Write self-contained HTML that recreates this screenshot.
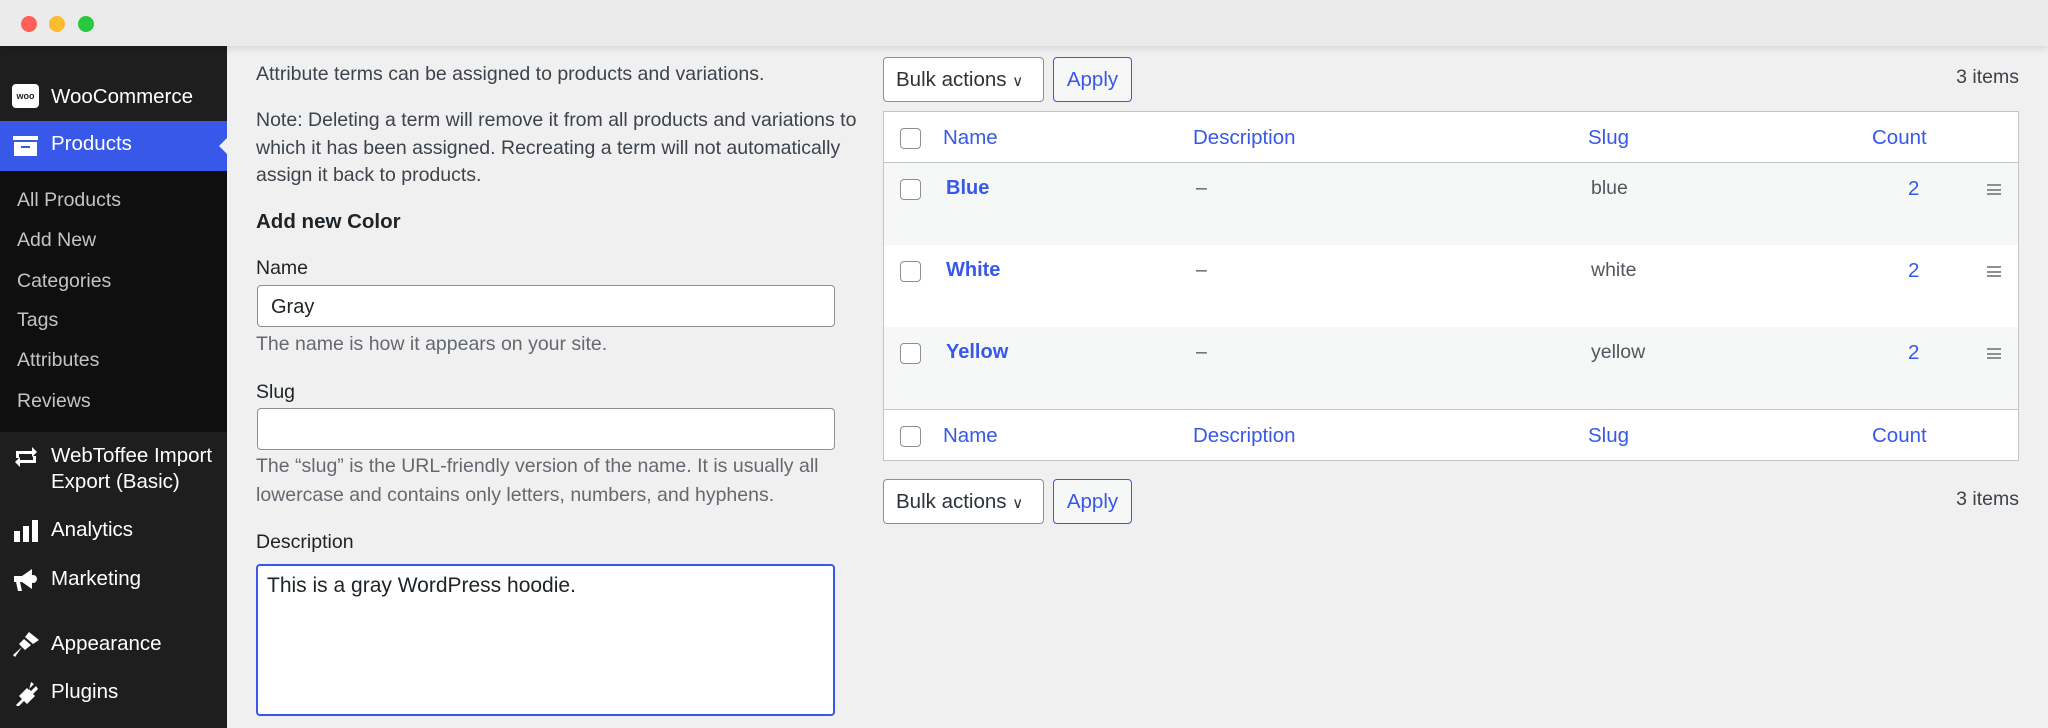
<!DOCTYPE html>
<html><head><meta charset="utf-8"><style>
*{margin:0;padding:0;box-sizing:border-box}
body{width:2048px;height:728px;overflow:hidden;background:#f0f0f1;font-family:"Liberation Sans",sans-serif;position:relative;color:#1d2327}
.a{position:absolute;white-space:nowrap}
.tb{position:absolute;left:0;top:0;width:2048px;height:46px;background:#ebebeb;box-shadow:0 2px 8px rgba(0,0,0,.12);z-index:2}
.dot{position:absolute;top:16px;width:16px;height:16px;border-radius:50%}
.sb{position:absolute;left:0;top:46px;width:227px;height:682px;background:#1e1e1e}
.sub{position:absolute;left:0;top:171px;width:227px;height:261px;background:#0f0f0f}
.prod{position:absolute;left:0;top:121px;width:227px;height:50px;background:#3858e9}
.mi{color:#fff;font-size:20.5px}
.si{color:#c3c4c7;font-size:19.5px;left:17px}
.ic{position:absolute;left:12px}
.t{font-size:19.5px;color:#3c434a}
.lbl{font-size:19.5px;color:#1d2327}
.inp{position:absolute;background:#fff;border:1px solid #8c8f94;border-radius:4px}
.hl{color:#646970;font-size:19.5px}
.btn{position:absolute;height:45px;border-radius:4px;font-size:20.5px;line-height:43px}
.tbl{position:absolute;left:883px;top:111px;width:1136px;height:350px;background:#fff;border:1px solid #c3c4c7}
.row{position:absolute;left:0;width:1134px}
.cb{position:absolute;left:16px;width:21px;height:21px;border:1px solid #8c8f94;border-radius:4px;background:#fff}
.hd{color:#3858e9;font-size:20.5px}
.nm{color:#3858e9;font-size:20px;font-weight:bold}
.cell{font-size:19.5px;color:#50575e}
.hm{position:absolute;width:14px;height:11px;border-top:2px solid #8c8f94;border-bottom:2px solid #8c8f94}
.hm:after{content:"";position:absolute;left:0;top:2.5px;width:14px;height:2px;background:#8c8f94}
</style></head><body>
<div class="tb">
<div class="dot" style="left:21px;background:#fe5f57"></div>
<div class="dot" style="left:49px;background:#febc2e"></div>
<div class="dot" style="left:78px;background:#28c840"></div>
</div>
<div class="sb"></div>
<div class="sub"></div>
<div class="prod"></div>
<div class="a" style="left:219px;top:137px;width:0;height:0;border-top:9px solid transparent;border-bottom:9px solid transparent;border-right:9px solid #f0f0f1"></div>

<div class="ic" style="top:84px;width:27px;height:24px;background:#fff;border-radius:4px;font-size:9px;font-weight:bold;color:#1e1e1e;text-align:center;line-height:24px">woo</div>
<div class="a mi" style="left:51px;top:85px">WooCommerce</div>
<div class="ic" style="top:136px;width:25px;height:4px;background:#fff;left:13px"></div>
<div class="ic" style="top:142px;width:23px;height:14px;background:#fff;left:14px"><div style="margin:4px 7px;width:9px;height:2px;background:#3858e9"></div></div>
<div class="a mi" style="left:51px;top:132px">Products</div>

<div class="a si" style="top:189px">All Products</div>
<div class="a si" style="top:229px">Add New</div>
<div class="a si" style="top:270px">Categories</div>
<div class="a si" style="top:309px">Tags</div>
<div class="a si" style="top:349px">Attributes</div>
<div class="a si" style="top:390px">Reviews</div>

<svg class="ic" style="top:446px;left:14px" width="24" height="22" viewBox="0 0 24 22" fill="#fff"><path d="M2 5h16V1l5 5-5 5V8H5v4H2zM22 17H6v4l-5-5 5-5v3h13v-4h3z"/></svg>
<div class="a mi" style="left:51px;top:444px">WebToffee Import</div>
<div class="a mi" style="left:51px;top:470px">Export (Basic)</div>
<svg class="ic" style="top:520px;left:14px" width="24" height="22" fill="#fff"><rect x="0" y="11" width="6" height="11"/><rect x="9" y="6" width="6" height="16"/><rect x="18" y="0" width="6" height="22"/></svg>
<div class="a mi" style="left:51px;top:518px">Analytics</div>
<svg class="ic" style="top:567px;left:13px" width="26" height="26" fill="#fff"><path d="M1 9h8l10-7v20L9 15H7l2 9H5l-2-9H1z"/><circle cx="20" cy="12" r="4"/></svg>
<div class="a mi" style="left:51px;top:567px">Marketing</div>
<svg class="ic" style="top:632px;left:13px" width="26" height="26" fill="#fff"><path d="M16 0l10 8-6 4-8-7zM11 7l7 6-6 5-3-3-7 10-2-2 9-8-3-3z"/></svg>
<div class="a mi" style="left:51px;top:632px">Appearance</div>
<svg class="ic" style="top:680px;left:13px" width="26" height="26" fill="#fff"><path d="M18 2l3 2-5 5 2 2 5-5 2 3-5 5 2 2-8 8-3-3-6 6-2-2 6-6-3-3 8-8 2 2z"/></svg>
<div class="a mi" style="left:51px;top:680px">Plugins</div>

<div class="a t" style="left:256px;top:63px">Attribute terms can be assigned to products and variations.</div>
<div class="a t" style="left:256px;top:109px">Note: Deleting a term will remove it from all products and variations to</div>
<div class="a t" style="left:256px;top:137px">which it has been assigned. Recreating a term will not automatically</div>
<div class="a t" style="left:256px;top:164px">assign it back to products.</div>
<div class="a" style="left:256px;top:210px;font-size:20.5px;font-weight:bold;color:#1d2327">Add new Color</div>
<div class="a lbl" style="left:256px;top:257px">Name</div>
<div class="inp" style="left:257px;top:285px;width:578px;height:42px"><span style="position:absolute;left:13px;top:10px;font-size:20px">Gray</span></div>
<div class="a hl" style="left:256px;top:333px">The name is how it appears on your site.</div>
<div class="a lbl" style="left:256px;top:381px">Slug</div>
<div class="inp" style="left:257px;top:408px;width:578px;height:42px"></div>
<div class="a hl" style="left:256px;top:455px">The “slug” is the URL-friendly version of the name. It is usually all</div>
<div class="a hl" style="left:256px;top:484px">lowercase and contains only letters, numbers, and hyphens.</div>
<div class="a lbl" style="left:256px;top:531px">Description</div>
<div class="inp" style="left:256px;top:564px;width:579px;height:152px;border:2px solid #3858e9"><span style="position:absolute;left:9px;top:8px;font-size:21px">This is a gray WordPress hoodie.</span></div>

<div class="btn" style="left:883px;top:57px;width:161px;background:#fff;border:1px solid #8c8f94;padding-left:12px;color:#2c3338">Bulk actions <span style="font-size:15px">&#8744;</span></div>
<div class="btn" style="left:1053px;top:57px;width:79px;background:#f6f7f7;border:1px solid #3858e9;color:#3858e9;text-align:center">Apply</div>
<div class="a" style="right:29px;top:66px;font-size:19.5px;color:#3c434a">3 items</div>

<div class="tbl">
<div class="row" style="top:0;height:51px;border-bottom:1px solid #c3c4c7">
<div class="cb" style="top:16px"></div>
<div class="a hd" style="left:59px;top:14px">Name</div>
<div class="a hd" style="left:309px;top:14px">Description</div>
<div class="a hd" style="left:704px;top:14px">Slug</div>
<div class="a hd" style="left:988px;top:14px">Count</div>
</div>
<div class="row" style="top:51px;height:82px;background:#f6f7f7">
<div class="cb" style="top:16px"></div>
<div class="a nm" style="left:62px;top:14px">Blue</div>
<div class="a cell" style="left:312px;top:14px">–</div>
<div class="a cell" style="left:707px;top:14px">blue</div>
<div class="a hd" style="left:1024px;top:14px">2</div>
<div class="hm" style="left:1103px;top:21px"></div>
</div>
<div class="row" style="top:133px;height:82px;background:#fff">
<div class="cb" style="top:16px"></div>
<div class="a nm" style="left:62px;top:14px">White</div>
<div class="a cell" style="left:312px;top:14px">–</div>
<div class="a cell" style="left:707px;top:14px">white</div>
<div class="a hd" style="left:1024px;top:14px">2</div>
<div class="hm" style="left:1103px;top:21px"></div>
</div>
<div class="row" style="top:215px;height:82px;background:#f6f7f7">
<div class="cb" style="top:16px"></div>
<div class="a nm" style="left:62px;top:14px">Yellow</div>
<div class="a cell" style="left:312px;top:14px">–</div>
<div class="a cell" style="left:707px;top:14px">yellow</div>
<div class="a hd" style="left:1024px;top:14px">2</div>
<div class="hm" style="left:1103px;top:21px"></div>
</div>
<div class="row" style="top:297px;height:51px;border-top:1px solid #c3c4c7">
<div class="cb" style="top:16px"></div>
<div class="a hd" style="left:59px;top:14px">Name</div>
<div class="a hd" style="left:309px;top:14px">Description</div>
<div class="a hd" style="left:704px;top:14px">Slug</div>
<div class="a hd" style="left:988px;top:14px">Count</div>
</div>
</div>

<div class="btn" style="left:883px;top:479px;width:161px;background:#fff;border:1px solid #8c8f94;padding-left:12px;color:#2c3338">Bulk actions <span style="font-size:15px">&#8744;</span></div>
<div class="btn" style="left:1053px;top:479px;width:79px;background:#f6f7f7;border:1px solid #3858e9;color:#3858e9;text-align:center">Apply</div>
<div class="a" style="right:29px;top:488px;font-size:19.5px;color:#3c434a">3 items</div>
</body></html>
